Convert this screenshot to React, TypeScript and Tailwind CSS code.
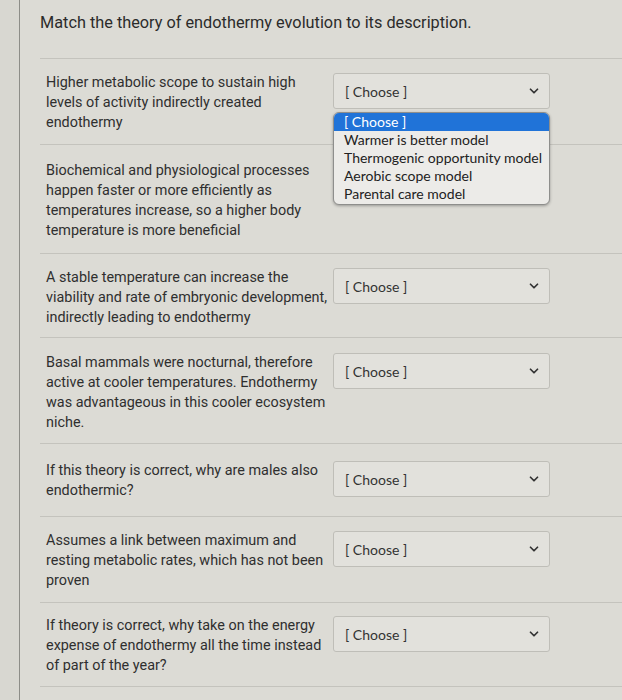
import { ChevronDown } from "lucide-react";

type Row = { text: string; open?: boolean; noSelect?: boolean; pad: string };

const ROWS: Row[] = [
  {
    text: "Higher metabolic scope to sustain high levels of activity indirectly created endothermy",
    open: true,
    pad: "pt-[14px] pb-[11px]",
  },
  {
    text: "Biochemical and physiological processes happen faster or more efficiently as temperatures increase, so a higher body temperature is more beneficial",
    noSelect: true,
    pad: "pt-[16px] pb-[12px]",
  },
  {
    text: "A stable temperature can increase the viability and rate of embryonic development, indirectly leading to endothermy",
    pad: "pt-[14px] pb-[9px]",
  },
  {
    text: "Basal mammals were nocturnal, therefore active at cooler temperatures. Endothermy was advantageous in this cooler ecosystem niche.",
    pad: "pt-[15px] pb-[10px]",
  },
  {
    text: "If this theory is correct, why are males also endothermic?",
    pad: "pt-[17px] pb-[15px]",
  },
  {
    text: "Assumes a link between maximum and resting metabolic rates, which has not been proven",
    pad: "pt-[14px] pb-[11px]",
  },
  {
    text: "If theory is correct, why take on the energy expense of endothermy all the time instead of part of the year?",
    pad: "pt-[13px] pb-[10px]",
  },
];

const OPTIONS = [
  "Warmer is better model",
  "Thermogenic opportunity model",
  "Aerobic scope model",
  "Parental care model",
];

function ChooseBox({ open }: { open?: boolean }) {
  return (
    <div className="relative w-[217px] shrink-0">
      <div className="h-[36px] flex items-center justify-between pl-[11px] pr-[8px] bg-[#e2e1dc] border border-[#bfbeb8] rounded-[3px]">
        <span className="text-[14px] text-[#333] font-['Lato',sans-serif]">[ Choose ]</span>
        <ChevronDown className="w-[14px] h-[14px] text-[#333]" strokeWidth={3} />
      </div>
      {open && (
        <div className="absolute left-0 top-[39px] w-[217px] z-10 bg-[#ecebe8] border border-[#8e8e8c] rounded-[6px] shadow-[0_1px_3px_rgba(0,0,0,0.3)] overflow-hidden pb-[1px] font-['Lato',sans-serif] text-[14px] leading-[18px] text-[#222] whitespace-nowrap">
          <div className="bg-[#2073d8] text-white pl-[10px]">[ Choose ]</div>
          {OPTIONS.map((o) => (
            <div key={o} className="pl-[10px]">
              {o}
            </div>
          ))}
        </div>
      )}
    </div>
  );
}

export default function App() {
  return (
    <div className="w-[622px] h-[700px] overflow-hidden bg-[#dcdbd5] flex font-['Roboto',sans-serif] text-[#2f2f2f]">
      <div className="w-[20px] shrink-0 border-r border-[#8d8d88] bg-[#d8d7d1]" />
      <div className="flex-1 pl-[20px]">
        <div className="h-[59px] pt-[13px] border-b border-[#c4c3bd]">
          <h1 className="text-[16.3px] leading-[20px] text-[#2b2b2b]">
            Match the theory of endothermy evolution to its description.
          </h1>
        </div>
        {ROWS.map((r, i) => (
          <div key={i} className={`flex items-start gap-[3px] border-b border-[#c4c3bd] pl-[6px] ${r.pad}`}>
            <p className="w-[284px] shrink-0 text-[14.4px] leading-[20px]">{r.text}</p>
            {!r.noSelect && <ChooseBox open={r.open} />}
          </div>
        ))}
      </div>
    </div>
  );
}
